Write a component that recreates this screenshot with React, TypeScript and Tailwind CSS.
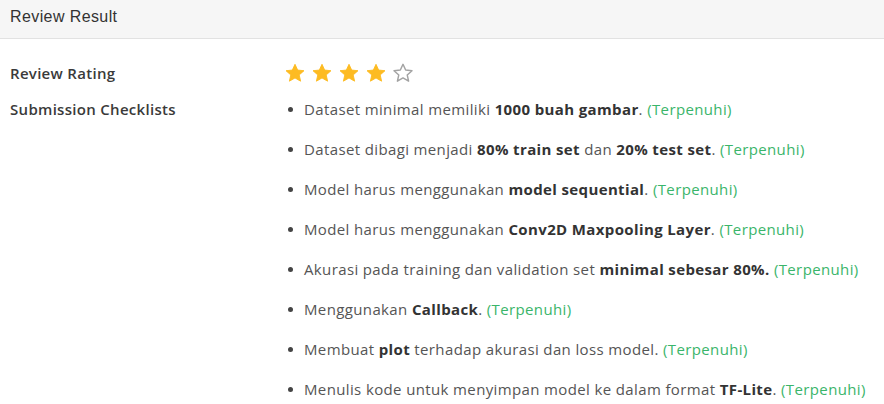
import React from 'react';

type Item = { parts: { text: string; bold?: boolean }[] };

const items: Item[] = [
  { parts: [{ text: 'Dataset minimal memiliki ' }, { text: '1000 buah gambar', bold: true }, { text: '.' }] },
  {
    parts: [
      { text: 'Dataset dibagi menjadi ' },
      { text: '80% train set', bold: true },
      { text: ' dan ' },
      { text: '20% test set', bold: true },
      { text: '.' },
    ],
  },
  { parts: [{ text: 'Model harus menggunakan ' }, { text: 'model sequential', bold: true }, { text: '.' }] },
  { parts: [{ text: 'Model harus menggunakan ' }, { text: 'Conv2D Maxpooling Layer', bold: true }, { text: '.' }] },
  {
    parts: [
      { text: 'Akurasi pada training dan validation set ' },
      { text: 'minimal sebesar 80%.', bold: true },
    ],
  },
  { parts: [{ text: 'Menggunakan ' }, { text: 'Callback', bold: true }, { text: '.' }] },
  { parts: [{ text: 'Membuat ' }, { text: 'plot', bold: true }, { text: ' terhadap akurasi dan loss model.' }] },
  {
    parts: [
      { text: 'Menulis kode untuk menyimpan model ke dalam format ' },
      { text: 'TF-Lite', bold: true },
      { text: '.' },
    ],
  },
];

function Star({ filled }: { filled: boolean }) {
  return (
    <svg width="22" height="22" viewBox="0 0 24 24">
      <path
        d="M12 2.5l2.9 6.3 6.9.7-5.2 4.6 1.5 6.8L12 17.4l-6.1 3.5 1.5-6.8-5.2-4.6 6.9-.7z"
        fill={filled ? '#fdbb22' : 'none'}
        stroke={filled ? '#fdbb22' : '#a3a3a3'}
        strokeWidth={filled ? 1 : 1.6}
        strokeLinejoin="round"
      />
    </svg>
  );
}

export default function App() {
  return (
    <div className="w-[884px] h-[404px] overflow-hidden bg-white" style={{ fontFamily: '"Open Sans", sans-serif' }}>
      <div className="h-[39px] bg-[#f6f6f6] border-b border-[#e2e2e2] px-[10px] flex items-center pb-[4px]">
        <span className="text-[16px] tracking-[0.4px] text-[#333] font-['Liberation_Sans',sans-serif]">Review Result</span>
      </div>

      <div className="pt-[22px] px-[10px] text-[15px]">
        <div className="flex items-center h-[24px]">
          <div className="w-[274px] font-semibold text-[#3a3a3a] tracking-[0.3px]">Review Rating</div>
          <div className="flex gap-[5px]">
            {[1, 2, 3, 4, 5].map((i) => (
              <Star key={i} filled={i <= 4} />
            ))}
          </div>
        </div>

        <div className="flex mt-[13px]">
          <div className="w-[274px] font-semibold text-[#3a3a3a] leading-[22px] tracking-[0.3px]">Submission Checklists</div>
          <ul className="flex flex-col gap-[18px]">
            {items.map((item, idx) => (
              <li key={idx} className="flex items-start leading-[22px] text-[#555] tracking-[0.37px]">
                <span className="w-[20px] h-[22px] flex items-center pl-[4px]">
                  <span className="block w-[5px] h-[5px] rounded-full bg-[#444]" />
                </span>
                <span>
                  {item.parts.map((p, j) =>
                    p.bold ? (
                      <b key={j} className="font-bold text-[#333]">
                        {p.text}
                      </b>
                    ) : (
                      <React.Fragment key={j}>{p.text}</React.Fragment>
                    )
                  )}{' '}
                  <span className="text-[#3ab56a]">(Terpenuhi)</span>
                </span>
              </li>
            ))}
          </ul>
        </div>
      </div>
    </div>
  );
}
